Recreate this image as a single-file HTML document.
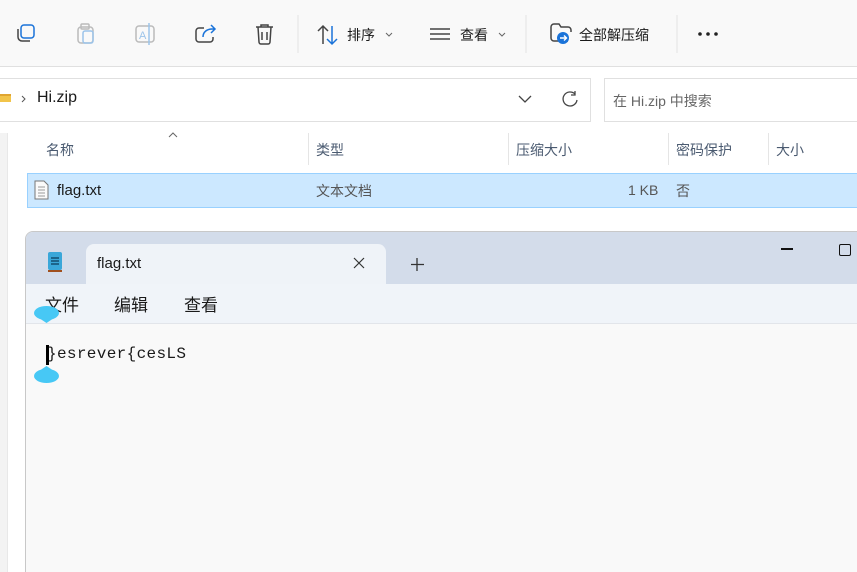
<!DOCTYPE html><html><head><meta charset="utf-8"><style>
*{margin:0;padding:0;box-sizing:border-box}
html,body{width:857px;height:572px;overflow:hidden}
body{background:#fff;font-family:"Liberation Sans","Noto Sans CJK SC",sans-serif;position:relative;color:#1a1a1a}
.a{position:absolute}
.t{font-size:14px;white-space:nowrap}
</style></head><body>
<div class="a" style="left:0;top:0;width:857px;height:67px;background:#f9f9f9;border-bottom:1px solid #e0e0e0"></div>
<svg class="a" style="left:0;top:0" width="857" height="67">
 <g fill="none" stroke-width="1.5">
 <rect x="21" y="25" width="13" height="13" rx="3" stroke="#1a73d9"/><path d="M18 29v8a4 4 0 0 0 4 4h8" stroke="#444"/>
 <rect x="78" y="27" width="15" height="16" rx="3" stroke="#bbb"/><rect x="83" y="31" width="10" height="12" rx="2" stroke="#9cc4ea"/><rect x="81" y="24" width="8" height="5" rx="1" stroke="#bbb"/>
 <rect x="136" y="26" width="18" height="16" rx="3" stroke="#bbb"/><text x="139" y="39" font-size="11" fill="#9cc4ea" stroke="none" font-family="Liberation Sans">A</text><path d="M149 23v22" stroke="#9cc4ea"/>
 <path d="M204 28h-5a3 3 0 0 0-3 3v8a3 3 0 0 0 3 3h11a3 3 0 0 0 3-3v-2" stroke="#444"/><path d="M203 37c0-5 4-8 9-8h3M211 25l4 4-4 4" stroke="#1a73d9"/>
 <path d="M256 27h17M261 27v-2h7v2M258 27l1 15a2 2 0 0 0 2 2h7a2 2 0 0 0 2-2l1-15M262 32v8M267 32v8" stroke="#444"/>
 <path d="M323 26v18M318 31l5-5 5 5" stroke="#444"/><path d="M332 26v18M327 39l5 5 5-5" stroke="#1a73d9"/>
 <path d="M430 29h20M430 34h20M430 39h20" stroke="#444"/>
 <path d="M568 41h-14a3 3 0 0 1-3-3v-11a3 3 0 0 1 3-3h5l2 3h7a3 3 0 0 1 3 3v2" stroke="#444"/>
 <path d="M386 33l3 3 3-3M499 33l3 3 3-3" stroke="#666" stroke-width="1"/>
 </g>
 <circle cx="563" cy="38" r="6" fill="#1a73d9"/><path d="M560 38h6M564 35.5l2.5 2.5-2.5 2.5" stroke="#fff" stroke-width="1.4" fill="none"/>
 <line x1="298" y1="15" x2="298" y2="53" stroke="#e3e3e3"/><line x1="526" y1="15" x2="526" y2="53" stroke="#e3e3e3"/><line x1="677" y1="15" x2="677" y2="53" stroke="#e3e3e3"/>
 <circle cx="700" cy="34" r="1.8" fill="#222"/><circle cx="708" cy="34" r="1.8" fill="#222"/><circle cx="716" cy="34" r="1.8" fill="#222"/>
</svg>
<div class="a t" style="left:347px;top:25px">排序</div>
<div class="a t" style="left:460px;top:25px">查看</div>
<div class="a t" style="left:579px;top:25px">全部解压缩</div>
<div class="a" style="left:-4px;top:78px;width:595px;height:44px;border:1px solid #e0e0e0;background:#fff"></div>
<div class="a" style="left:0;top:94px;width:11px;height:8px;background:#f2c44a;border-top:2px solid #e0a531"></div>
<svg class="a" style="left:0;top:78px" width="600" height="44"><path d="M22 18l3 3-3 3" stroke="#555" fill="none"/><path d="M519 18l6 6 6-6" stroke="#444" fill="none" stroke-width="1.3"/><path d="M575 16a7 7 0 1 0 2 6M575 13v4h-4" stroke="#444" fill="none" stroke-width="1.3"/></svg>
<div class="a" style="left:37px;top:89px;font-size:16px">Hi.zip</div>
<div class="a" style="left:604px;top:78px;width:260px;height:44px;border:1px solid #e0e0e0;background:#fff"></div>
<div class="a t" style="left:613px;top:91px;color:#666">在 Hi.zip 中搜索</div>
<div class="a" style="left:0;top:133px;width:8px;height:439px;background:#f3f3f3;border-right:1px solid #e8e8e8"></div>
<svg class="a" style="left:0;top:130px" width="857" height="40"><path d="M169 7l4-4 4 4" stroke="#666" fill="none"/><g stroke="#e5e5e5"><line x1="308.5" y1="3" x2="308.5" y2="35"/><line x1="508.5" y1="3" x2="508.5" y2="35"/><line x1="668.5" y1="3" x2="668.5" y2="35"/><line x1="768.5" y1="3" x2="768.5" y2="35"/></g></svg>
<div class="a t" style="left:46px;top:140px;color:#4a5a70">名称</div>
<div class="a t" style="left:316px;top:140px;color:#4a5a70">类型</div>
<div class="a t" style="left:516px;top:140px;color:#4a5a70">压缩大小</div>
<div class="a t" style="left:676px;top:140px;color:#4a5a70">密码保护</div>
<div class="a t" style="left:776px;top:140px;color:#4a5a70">大小</div>
<div class="a" style="left:27px;top:173px;width:840px;height:35px;background:#cce8ff;border:1px solid #99d1ff"></div>
<svg class="a" style="left:34px;top:180px" width="16" height="20"><path d="M1 1h9l4 4v14H1z" fill="#fafafa" stroke="#777"/><path d="M4 7h7M4 10h7M4 13h7M4 16h7" stroke="#999"/></svg>
<div class="a" style="left:57px;top:182px;font-size:15px">flag.txt</div>
<div class="a t" style="left:316px;top:181px;color:#555">文本文档</div>
<div class="a t" style="left:628px;top:182px;color:#555">1 KB</div>
<div class="a t" style="left:676px;top:181px;color:#555">否</div>
<div class="a" style="left:25px;top:231px;width:840px;height:345px;border:1px solid #c8c8c8;border-radius:8px 0 0 0;background:#f9f9f9;overflow:hidden">
 <div class="a" style="left:0;top:0;width:840px;height:52px;background:#d3dcea"></div>
 <div class="a" style="left:60px;top:12px;width:300px;height:42px;background:#eff3f8;border-radius:8px 8px 0 0"></div>
 <div class="a" style="left:0;top:52px;width:840px;height:40px;background:#f0f4f9;border-bottom:1px solid #e2e5ea"></div>
</div>
<svg class="a" style="left:45px;top:250px" width="20" height="24"><rect x="3" y="2" width="14" height="18" rx="2" fill="#3aa7d9"/><path d="M6 8h8M6 11h8M6 14h8" stroke="#0a3d5c" stroke-width="1.3"/><rect x="3" y="20" width="14" height="2" fill="#a0501e"/></svg>
<div class="a" style="left:97px;top:255px;font-size:15px">flag.txt</div>
<svg class="a" style="left:350px;top:254px" width="80" height="20"><path d="M4 4l10 10M14 4L4 14" stroke="#333" stroke-width="1.2"/><path d="M67 4v13M61 10.5h13" stroke="#333" stroke-width="1.3"/></svg>
<div class="a" style="left:781px;top:248px;width:12px;height:1.5px;background:#111"></div>
<div class="a" style="left:839px;top:244px;width:12px;height:12px;border:1.5px solid #111;border-radius:2px"></div>
<div class="a" style="left:45px;top:291px;font-size:17px">文件</div>
<div class="a" style="left:114px;top:291px;font-size:17px">编辑</div>
<div class="a" style="left:184px;top:291px;font-size:17px">查看</div>
<div class="a" style="left:47px;top:345px;font-family:'Liberation Mono',monospace;font-size:16px;letter-spacing:0.35px">}esrever{cesLS</div>
<div class="a" style="left:46px;top:345px;width:3px;height:20px;background:#000"></div>
<svg class="a" style="left:33px;top:300px" width="28" height="88">
 <ellipse cx="13.5" cy="13" rx="12.5" ry="7" fill="#47c8f5"/><path d="M3 16L13.5 23 24 16z" fill="#47c8f5"/>
 <ellipse cx="13.5" cy="76" rx="12.5" ry="7" fill="#47c8f5"/><path d="M3 73L13.5 66 24 73z" fill="#47c8f5"/>
</svg>
</body></html>
